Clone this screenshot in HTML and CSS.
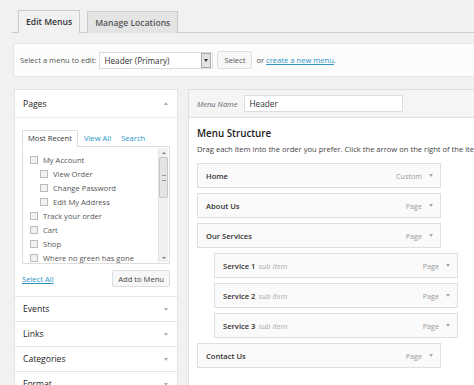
FILE: index.html
```
<!DOCTYPE html>
<html lang="en">
  <head>
    <title>Menus</title>
<link rel="stylesheet" href="styles.css">
  </head>
  <body>
    <div id="wrap">
      <div class="nav-tabs">
        <span class="nav-tab active">Edit Menus</span>
        <span class="nav-tab">Manage Locations</span>
      </div>

      <div class="manage-menus">
        <span class="manage-label">Select a menu to edit:</span>
        <span class="menu-select"><span class="sel-text">Header (Primary)</span><span class="sel-arrow"><i class="tri-down dark"></i></span></span>
        <span class="button">Select</span>
        <span class="or-new">or <a href="#">create a new menu</a>.</span>
      </div>

      <div class="columns">
        <div class="side">
          <div class="box">
            <div class="box-head"><span>Pages</span><i class="tri-up"></i></div>
            <div class="box-inside">
              <div class="tabs">
                <span class="tab active">Most Recent</span>
                <a class="tab" href="#">View All</a>
                <a class="tab" href="#">Search</a>
              </div>
              <div class="listing">
                <ul class="checklist">
                  <li><span class="cb"></span>My Account</li>
                  <li class="child"><span class="cb"></span>View Order</li>
                  <li class="child"><span class="cb"></span>Change Password</li>
                  <li class="child"><span class="cb"></span>Edit My Address</li>
                  <li><span class="cb"></span>Track your order</li>
                  <li><span class="cb"></span>Cart</li>
                  <li><span class="cb"></span>Shop</li>
                  <li><span class="cb"></span>Where no green has gone</li>
                </ul>
                <div class="scrollbar">
                  <span class="sb-btn"><i class="tri-up small"></i></span>
                  <span class="sb-thumb"><span class="grip"></span></span>
                  <span class="sb-track"></span>
                  <span class="sb-btn"><i class="tri-down small"></i></span>
                </div>
              </div>
              <div class="box-actions">
                <a href="#">Select All</a>
                <span class="button">Add to Menu</span>
              </div>
            </div>
          </div>
          <div class="box closed"><div class="box-head"><span>Events</span><i class="tri-down"></i></div></div>
          <div class="box closed"><div class="box-head"><span>Links</span><i class="tri-down"></i></div></div>
          <div class="box closed"><div class="box-head"><span>Categories</span><i class="tri-down"></i></div></div>
          <div class="box closed"><div class="box-head"><span>Format</span><i class="tri-down"></i></div></div>
        </div>

        <div class="menu-edit">
          <div class="menu-header">
            <label>Menu Name</label>
            <span class="name-input">Header</span>
          </div>
          <div class="menu-body">
            <h3>Menu Structure</h3>
            <p class="drag-hint">Drag each item into the order you prefer. Click the arrow on the right of the item to reveal additional configuration options.</p>
            <ul class="menu-items">
              <li class="item"><b>Home</b><span class="type">Custom</span><i class="tri-down"></i></li>
              <li class="item"><b>About Us</b><span class="type">Page</span><i class="tri-down"></i></li>
              <li class="item"><b>Our Services</b><span class="type">Page</span><i class="tri-down"></i></li>
              <li class="item depth-1"><b>Service 1</b><em>sub item</em><span class="type">Page</span><i class="tri-down"></i></li>
              <li class="item depth-1"><b>Service 2</b><em>sub item</em><span class="type">Page</span><i class="tri-down"></i></li>
              <li class="item depth-1"><b>Service 3</b><em>sub item</em><span class="type">Page</span><i class="tri-down"></i></li>
              <li class="item"><b>Contact Us</b><span class="type">Page</span><i class="tri-down"></i></li>
            </ul>
          </div>
        </div>
      </div>
    </div>
  </body>
</html>
```

FILE: styles.css
```
html, body { margin: 0; overflow: hidden; }
body { background: #f1f1f1; font-family: "Open Sans", "Liberation Sans", sans-serif; font-size: 7.6px; color: #444; width: 474px; height: 385px; white-space: nowrap; }
a { color: #2a95c5; }
ul { list-style: none; margin: 0; padding: 0; }

#wrap { padding-left: 12px; }

/* tabs */
.nav-tabs { display: flex; gap: 7px; padding: 10px 0 0 6px; border-bottom: 1px solid #ccc; height: 22px; }
.nav-tab { display: flex; align-items: center; justify-content: center; height: 21px; margin-top: 1px; padding: 0 7px; border: 1px solid #ccc; border-bottom: 0; background: #e4e4e4; color: #555; font-weight: 600; font-size: 8.6px; }
.nav-tab.active { background: #f1f1f1; color: #333; height: 22px; margin-top: 0; margin-bottom: -1px; padding: 0 7px; }

/* select bar */
.manage-menus { display: flex; align-items: center; margin: 10px 0 0 1px; height: 32px; background: #fcfcfc; border: 1px solid #e5e5e5; border-right: 0; padding-left: 6px; color: #555; }
.manage-label { margin-right: 3px; }
.menu-select { display: flex; align-items: center; width: 112px; height: 15px; border: 1px solid #ddd; background: #fff; font-size: 8.2px; color: #333; }
.sel-text { flex: 1; padding-left: 4px; }
.sel-arrow { display: flex; align-items: center; justify-content: center; width: 8px; height: 13px; margin-right: 1px; border: 1px solid #aaa; background: #e2e2e2; }
.button { display: inline-flex; align-items: center; justify-content: center; height: 16px; padding: 0 6px; border: 1px solid #ddd; background: #f7f7f7; color: #555; border-radius: 2px; margin-left: 4px; }
.or-new { margin-left: 4px; }

/* columns */
.columns { display: flex; gap: 10px; margin-top: 12px; margin-left: 2px; }
.side { width: 164px; flex: none; }

.box { background: #fff; border: 1px solid #e5e5e5; }
.box-head { display: flex; align-items: center; justify-content: space-between; height: 27px; padding: 0 9px 0 8px; font-size: 8.6px; color: #222; }
.box > .box-head { border-bottom: 1px solid #eee; }
.box.closed { border-top: 0; }
.box.closed .box-head { height: 24px; border-bottom: 0; }

.box-inside { padding: 12px 7px 9px 7px; }
.tabs { display: flex; align-items: flex-end; height: 16px; font-size: 7.6px; }
.tab { padding: 0 5px; height: 15px; line-height: 15px; text-decoration: none; }
.tab.active { border: 1px solid #ddd; border-bottom: 1px solid #fff; background: #fff; margin-bottom: -1px; color: #333; padding: 0 5px; }
a.tab { margin-left: 1px; }
a.tab + a.tab { margin-left: 0; }

.listing { display: flex; height: 116px; border: 1px solid #ddd; background: #fff; }
.checklist { flex: 1; padding-top: 6px; color: #555; }
.checklist li { display: flex; align-items: center; height: 14px; padding-left: 7px; }
.checklist li.child { padding-left: 17px; }
.cb { width: 6px; height: 6px; border: 1px solid #bbb; background: #f1f1f1; margin-right: 5px; flex: none; }
.scrollbar { display: flex; flex-direction: column; width: 9px; margin: 1px 1px 1px 0; background: #f0f0f0; border-left: 1px solid #e4e4e4; }
.sb-btn { display: flex; align-items: center; justify-content: center; height: 9px; }
.sb-thumb { display: flex; align-items: center; justify-content: center; height: 39px; background: #e4e4e4; border: 1px solid #c8c8c8; border-radius: 2px; }
.grip { width: 4px; height: 4px; border-top: 1px solid #999; border-bottom: 1px solid #999; }
.sb-track { flex: 1; }

.box-actions { display: flex; align-items: center; justify-content: space-between; margin-top: 6px; }
.box-actions .button { height: 15px; padding: 0 5px; color: #444; margin-right: 0; }

/* triangles */
.tri-down, .tri-up { display: inline-block; width: 0; height: 0; border-left: 2.5px solid transparent; border-right: 2.5px solid transparent; }
.tri-down { border-top: 3px solid #aaa; }
.tri-up { border-bottom: 3px solid #aaa; }
.tri-down.dark { border-top-color: #333; border-left-width: 2px; border-right-width: 2px; }
.small { border-left-width: 2px; border-right-width: 2px; }
.tri-up.small { border-bottom: 2px solid #777; }
.tri-down.small { border-top: 2px solid #777; }

/* menu edit */
.menu-edit { width: 300px; flex: none; background: #fff; border: 1px solid #dfdfdf; border-right: 0; height: 320px; }
.menu-header { display: flex; align-items: center; height: 27px; background: #f5f5f5; border-bottom: 1px solid #dfdfdf; padding-left: 8px; }
.menu-header label { font-style: italic; font-size: 7.5px; color: #666; margin-right: 7px; }
.name-input { display: flex; align-items: center; width: 153px; height: 15px; padding-left: 4px; background: #fff; border: 1px solid #ddd; font-size: 8.3px; color: #333; }
.menu-body { padding: 9px 0 0 8px; }
.menu-body h3 { margin: 0; font-size: 9.8px; font-weight: 600; color: #222; line-height: 14px; }
.drag-hint { margin: 1px 0 0; font-size: 7.6px; color: #444; line-height: 14px; }
.menu-items { margin-top: 7px; }
.item { display: flex; align-items: center; width: 227px; height: 23px; margin-bottom: 5px; padding: 0 7px 0 8px; border: 1px solid #dfdfdf; background: #fafafa; }
.item b { font-weight: 600; color: #333; font-size: 7.6px; }
.item em { margin-left: 3px; color: #aaa; }
.item .type { margin-left: auto; margin-right: 7px; color: #999; font-size: 7.2px; }
.item.depth-1 { margin-left: 17px; }
```
